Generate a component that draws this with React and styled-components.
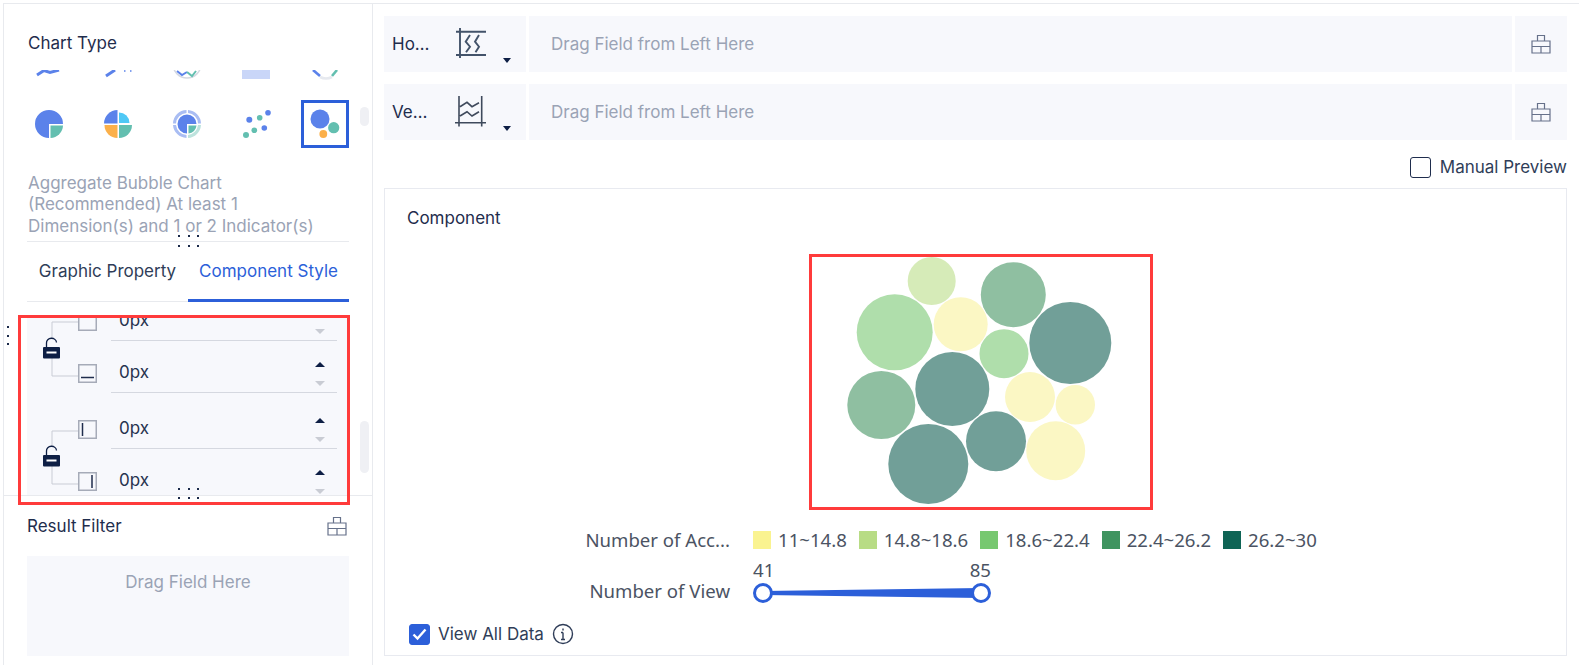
import React from "react";
import styled, { createGlobalStyle } from "styled-components";

const GlobalStyle = createGlobalStyle`
	html, body {
		margin: 0;
		padding: 0;
		background: #fff;
		overflow: hidden;
	}
	* {
		box-sizing: border-box;
	}
`;

const Page = styled.div`
	width: 1579px;
	height: 665px;
	padding-top: 3px;
	overflow: hidden;
	font-family: "Inter", "Liberation Sans", sans-serif;
	font-size: 17px;
	color: #1f2d4d;
`;

const Shell = styled.div`
	display: flex;
	height: 662px;
	margin-left: 3px;
	border-top: 1px solid #e8eaee;
`;

const SidePanel = styled.aside`
	position: relative;
	flex: 0 0 370px;
	padding-left: 23px;
	border-left: 1px solid #e8eaee;
	border-right: 1px solid #e8eaee;
`;

const SectionTitle = styled.div`
	line-height: 22px;
	padding: 28px 0 0 1px;
`;

const Scroller = styled.div`
	position: relative;
	width: 346px;
	height: 90px;
	margin: 16px 0 13px -2px;
	overflow: hidden;
`;

const TypeGrid = styled.div`
	display: grid;
	grid-template-columns: repeat(5, 48px);
	gap: 7px 21px;
	margin-top: -25px;
`;

const TypeCell = styled.div`
	display: flex;
	align-items: center;
	justify-content: center;
	height: 48px;
	border: 3px solid ${(props) => (props.$selected ? "#2c5fd9" : "transparent")};
`;

const ScrollThumb = styled.div`
	position: absolute;
	left: ${(props) => props.$left}px;
	top: ${(props) => props.$top}px;
	width: 9px;
	height: ${(props) => props.$height}px;
	border-radius: 5px;
	background: #eff0f4;
`;

const Hint = styled.div`
	width: 322px;
	padding: 0 0 4px 1px;
	line-height: 21.33px;
	white-space: nowrap;
	color: #9aa3b5;
	border-bottom: 1px solid #e8eaee;
`;

const Tabs = styled.div`
	display: flex;
	width: 322px;
	height: 60px;
`;

const Tab = styled.div`
	flex: 1;
	display: flex;
	align-items: center;
	justify-content: center;
	white-space: nowrap;
	color: ${(props) => (props.$active ? "#2c5fd9" : "#2f3d58")};
	border-bottom: ${(props) => (props.$active ? "3px solid #2c5fd9" : "1px solid #e8eaee")};
	padding-top: ${(props) => (props.$active ? "2px" : "0")};
`;

const StylePanel = styled.div`
	width: 322px;
	height: 177px;
	margin-top: 16px;
	background: #f7f8fc;
	overflow: hidden;
`;

const StyleInner = styled.div`
	display: flex;
	flex-direction: column;
	gap: 4px;
	margin-top: -29px;
`;

const LinkGroup = styled.div`
	display: flex;
	padding-left: 16px;

	> svg {
		flex: none;
		margin-top: -1px;
	}
`;

const GroupRows = styled.div`
	display: flex;
	flex-direction: column;
`;

const SizeRow = styled.div`
	display: flex;
	align-items: flex-start;
	height: 52px;
`;

const SideSquare = styled.svg`
	flex: none;
	margin-top: 23px;
`;

const SizeField = styled.div`
	display: flex;
	align-items: center;
	justify-content: space-between;
	width: 226px;
	height: 52px;
	margin-left: 14px;
	padding: 12px 12px 0 8px;
	border-bottom: 1px solid #d5d8e0;
	color: #26324f;
`;

const Stepper = styled.div`
	display: flex;
	flex-direction: column;
	gap: 14px;
	margin-top: 3px;
`;

const Arrow = styled.span`
	display: block;
	width: 0;
	height: 0;
	border-left: 5px solid transparent;
	border-right: 5px solid transparent;
	${(props) => (props.$down ? "border-top: 5px solid #c9ccd4;" : "border-bottom: 5px solid #0e1f45;")}
`;

const SideSplit = styled.div`
	height: 1px;
	margin-left: -23px;
	background: #e8eaee;
`;

const FilterHead = styled.div`
	display: flex;
	align-items: center;
	justify-content: space-between;
	width: 322px;
	height: 60px;
	padding-right: 2px;
`;

const DropBox = styled.div`
	width: 322px;
	height: 100px;
	padding-top: 16px;
	line-height: 20px;
	text-align: center;
	color: #9aa3b5;
	background: #f7f8fc;
`;

const HandleDots = styled.div`
	position: absolute;
	left: ${(props) => props.$left}px;
	top: ${(props) => props.$top}px;
	display: flex;
	flex-direction: ${(props) => (props.$vertical ? "column" : "row")};
	gap: ${(props) => (props.$vertical ? "6.5px" : "7.5px")};

	span {
		width: 2px;
		height: 2px;
		background: #1b2a4a;
	}
`;

const Highlight = styled.div`
	position: absolute;
	left: 14px;
	top: 311px;
	width: 332px;
	height: 190px;
	border: 3px solid #ff3b3b;
	pointer-events: none;
`;

const Main = styled.main`
	flex: 1;
	min-width: 0;
	padding: 12px 12px 0 11px;
`;

const DropRows = styled.div`
	display: flex;
	flex-direction: column;
	gap: 12px;
`;

const DropRow = styled.div`
	display: flex;
	gap: 3px;
	height: 56px;
`;

const AxisCell = styled.div`
	position: relative;
	display: flex;
	align-items: center;
	flex: 0 0 142px;
	padding-left: 8px;
	background: #f7f8fc;

	svg {
		margin-left: ${(props) => props.$iconGap}px;
	}
`;

const Caret = styled.span`
	position: absolute;
	right: 15px;
	bottom: ${(props) => props.$bottom}px;
	width: 0;
	height: 0;
	border-left: 4px solid transparent;
	border-right: 4px solid transparent;
	border-top: 5px solid #0e1f45;
`;

const FieldCell = styled.div`
	display: flex;
	align-items: center;
	flex: 1;
	padding-left: 22px;
	color: #9aa3b5;
	background: #f7f8fc;
`;

const ToolCell = styled.div`
	display: flex;
	align-items: center;
	justify-content: center;
	flex: 0 0 52px;
	background: #f7f8fc;
`;

const PreviewBar = styled.div`
	display: flex;
	justify-content: flex-end;
	align-items: center;
	gap: 9px;
	height: 48px;
	padding-top: 6px;
	color: #2f3d58;
	white-space: nowrap;
`;

const CheckBox = styled.span`
	display: flex;
	align-items: center;
	justify-content: center;
	width: 21px;
	height: 21px;
	border-radius: 3px;
	border: 1.5px solid ${(props) => (props.$checked ? "#2c5fd9" : "#1f2d4d")};
	background: ${(props) => (props.$checked ? "#2c5fd9" : "#fff")};
`;

const ChartCard = styled.section`
	height: 468px;
	padding: 20px 0 0 22px;
	border: 1px solid #e8eaf0;
`;

const CardTitle = styled.div`
	line-height: 18px;
`;

const ChartFrame = styled.div`
	width: 344px;
	height: 256px;
	margin: 27px 0 0 402px;
	border: 3px solid #ff3b3b;

	svg {
		display: block;
	}
`;

const LegendRow = styled.div`
	display: flex;
	align-items: ${(props) => (props.$end ? "flex-end" : "center")};
	margin-left: -22px;
	margin-top: ${(props) => props.$top}px;
	font-family: "Noto Sans", "Open Sans", sans-serif;
	font-size: 18.6px;
	color: #4b5363;
`;

const LegendLabel = styled.div`
	flex: 0 0 345px;
	line-height: 24px;
	text-align: right;
	padding-bottom: ${(props) => props.$bottom || 0}px;
	white-space: nowrap;
`;

const LegendItems = styled.div`
	display: flex;
	gap: 12px;
	margin-left: 23px;
`;

const LegendItem = styled.div`
	display: flex;
	align-items: center;
	gap: 7px;
	white-space: nowrap;
	line-height: 24px;

	i {
		width: 18px;
		height: 18px;
		background: ${(props) => props.$color};
	}
`;

const RangeSlider = styled.div`
	width: 244px;
	margin-left: 20px;

	svg {
		display: block;
	}
`;

const RangeValues = styled.div`
	display: flex;
	justify-content: space-between;
	padding: 0 3px 0 3px;
	line-height: 20px;
`;

const ViewAll = styled.div`
	display: flex;
	align-items: center;
	gap: 8px;
	margin: 17px 0 0 2px;
	color: #2f3d58;
`;

const BUBBLES = [
	[931.7, 281, 24, "#d6ebb8"],
	[1013.3, 294.7, 32.5, "#8fbfa1"],
	[894.7, 332.3, 38, "#afdeab"],
	[960.7, 324.3, 27, "#fbf7c4"],
	[1070.3, 343, 41, "#719f98"],
	[1004, 353.7, 24.5, "#afdeab"],
	[952.3, 389, 37, "#719f98"],
	[881.3, 405, 34, "#8fbfa1"],
	[1030, 397, 25, "#fbf7c4"],
	[1075.3, 404.7, 19.7, "#fbf7c4"],
	[996, 441.3, 30, "#719f98"],
	[928.3, 464, 40, "#719f98"],
	[1055.7, 450.7, 29.5, "#fbf7c4"],
];

const LEGEND = [
	["11~14.8", "#faf390"],
	["14.8~18.6", "#b8dc85"],
	["18.6~22.4", "#77c870"],
	["22.4~26.2", "#3f9460"],
	["26.2~30", "#0f6455"],
];

const BLUE = "#5b82ea";
const TEAL = "#63bfb0";
const ORANGE = "#fbb04a";

const TYPE_ICONS = [
	<path d="M3 21 10 16.500 16 18.500 25 16" fill="none" stroke={BLUE} strokeWidth="3" />,
	<g>
		<path d="M3 22 12 16" fill="none" stroke={BLUE} strokeWidth="3" />
		<path d="M21 17h1.500M27 17h1.500" stroke={BLUE} strokeWidth="1.500" />
	</g>,
	<g fill="none">
		<circle cx="15" cy="10" r="14" stroke="#d5d9e2" strokeWidth="1.500" />
		<path d="M5 17 10 21 15 18" stroke={BLUE} strokeWidth="2" />
		<path d="M15 18 20 22 24 17" stroke={TEAL} strokeWidth="2" />
	</g>,
	<rect x="1" y="10" width="28" height="15" fill="#c9d6f8" />,
	<g fill="none" strokeWidth="2.600">
		<path d="M3 16 10 22" stroke={BLUE} />
		<path d="M27 16 22 22" stroke={TEAL} />
		<path d="M10 23q6 3 12 0" stroke="#e6e9ef" />
	</g>,
	<g>
		<path d="M15 15V29A14 14 0 1 1 29 15H15" fill={BLUE} />
		<path d="M16.500 16.500H29A13 13 0 0 1 16.500 29Z" fill={TEAL} />
	</g>,
	<g>
		<path d="M14.500 1V14.500H1A13.500 13.500 0 0 1 14.500 1" fill={BLUE} />
		<path d="M16 3.500V14H26.500A10.500 10.500 0 0 0 16 3.500" fill="#4fc8f5" />
		<path d="M14.500 16V29A13 13 0 0 1 1.500 16Z" fill={ORANGE} />
		<path d="M16 16H29A13 13 0 0 1 16 29Z" fill={TEAL} />
	</g>,
	<g>
		<path d="M14.500 1A14 14 0 0 0 1 14.500H4A11 11 0 0 1 14.500 4ZM16 1A14 14 0 0 1 29 14.500H26A11 11 0 0 0 16 4ZM1 16A14 14 0 0 0 14.500 29V26A11 11 0 0 1 4 16Z" fill="#a9bdf3" />
		<path d="M29 16A14 14 0 0 1 16 29V26A11 11 0 0 0 26 16Z" fill="#bde3dd" />
		<path d="M15 15V24.500A9.500 9.500 0 1 1 24.500 15H15" fill={BLUE} />
		<path d="M16.500 16.500H24.500A8.500 8.500 0 0 1 16.500 24.500Z" fill={TEAL} />
	</g>,
	<g>
		<circle cx="27" cy="3.700" r="2.800" fill={BLUE} />
		<circle cx="18.700" cy="8.700" r="2.800" fill={TEAL} />
		<circle cx="8.300" cy="10.700" r="3" fill={BLUE} />
		<circle cx="23.300" cy="19" r="2.800" fill={BLUE} />
		<circle cx="13.300" cy="21.300" r="2.800" fill={TEAL} />
		<circle cx="5" cy="26" r="3" fill={TEAL} />
	</g>,
	<g>
		<circle cx="10" cy="10" r="9.500" fill={BLUE} />
		<circle cx="23.700" cy="18.700" r="5.600" fill={TEAL} />
		<circle cx="13.300" cy="25" r="3.900" fill={ORANGE} />
	</g>,
];

const ToolboxIcon = () => (
	<svg width="20" height="20" viewBox="0 0 20 20" fill="none" stroke="#66718a" strokeWidth="1.200">
		<path d="M1 7H19V19H1ZM6.500 7V1.500H13.500V7M1 12.500H19M10 12.500V19" />
	</svg>
);

const LinkBracket = ({ top, bottom }) => (
	<svg width="35" height="104" viewBox="0 0 35 104">
		<path d={`M35 ${top}H9V51M9 70V${bottom}H35`} fill="none" stroke="#c9ccd5" />
		<path d="M3.500 60V55A5 4.500 0 0 1 13.500 54.500" fill="none" stroke="#0e1f45" strokeWidth="1.300" />
		<rect x="0" y="59" width="17" height="11.500" rx="1" fill="#0e1f45" />
		<rect x="3.500" y="63.500" width="10" height="2" fill="#fff" />
	</svg>
);

const SideIcon = ({ side }) => {
	const marks = {
		top: "M3 4.500H16",
		bottom: "M3 13.500H16",
		left: "M4.500 3V16",
		right: "M14 3V16",
	};
	return (
		<SideSquare width="19" height="19" viewBox="0 0 19 19" fill="none">
			<rect x="0.750" y="0.750" width="17.500" height="17.500" stroke="#a6abb8" strokeWidth="1.500" />
			<path d={marks[side]} stroke="#1f2d4d" strokeWidth="1.500" />
		</SideSquare>
	);
};

const Dots = (props) => (
	<HandleDots {...props}>
		<span />
		<span />
		<span />
	</HandleDots>
);

const SizeInput = ({ side }) => (
	<SizeRow>
		<SideIcon side={side} />
		<SizeField>
			0px
			<Stepper>
				<Arrow />
				<Arrow $down />
			</Stepper>
		</SizeField>
	</SizeRow>
);

const App = () => {
	return (
		<Page>
			<GlobalStyle />
			<Shell>
				<SidePanel>
					<SectionTitle>Chart Type</SectionTitle>
					<Scroller>
						<TypeGrid>
							{TYPE_ICONS.map((icon, i) => (
								<TypeCell key={i} $selected={i === 9}>
									<svg width="30" height="30" viewBox="0 0 30 30">
										{icon}
									</svg>
								</TypeCell>
							))}
						</TypeGrid>
						<ScrollThumb $left={335} $top={37} $height={19} />
					</Scroller>
					<Hint>
						Aggregate Bubble Chart
						<br />
						(Recommended) At least 1
						<br />
						Dimension(s) and 1 or 2 Indicator(s)
					</Hint>
					<Tabs>
						<Tab>Graphic Property</Tab>
						<Tab $active>Component Style</Tab>
					</Tabs>
					<StylePanel>
						<StyleInner>
							<LinkGroup>
								<LinkBracket top={34} bottom={88} />
								<GroupRows>
									<SizeInput side="top" />
									<SizeInput side="bottom" />
								</GroupRows>
							</LinkGroup>
							<LinkGroup>
								<LinkBracket top={35} bottom={88} />
								<GroupRows>
									<SizeInput side="left" />
									<SizeInput side="right" />
								</GroupRows>
							</LinkGroup>
						</StyleInner>
					</StylePanel>
					<SideSplit />
					<FilterHead>
						Result Filter
						<ToolboxIcon />
					</FilterHead>
					<DropBox>Drag Field Here</DropBox>
					<ScrollThumb $left={356} $top={417} $height={52} />
					<Dots $left={174} $top={231} />
					<Dots $left={174} $top={241} />
					<Dots $left={174} $top={484} />
					<Dots $left={174} $top={493} />
					<Dots $left={3} $top={322} $vertical />
					<Highlight />
				</SidePanel>
				<Main>
					<DropRows>
						<DropRow>
							<AxisCell $iconGap={26}>
								Ho…
								<svg width="32" height="32" viewBox="0 0 32 32" fill="none" stroke="#43536a" strokeWidth="1.900">
									<path d="M0 3.700H30M0 27H30M4 0V30M14 7 9.700 13.700 14 18.700 10 24.300M23 7 19 13.700 23 18.700 19.500 24.300" />
								</svg>
								<Caret $bottom={9} />
							</AxisCell>
							<FieldCell>Drag Field from Left Here</FieldCell>
							<ToolCell>
								<ToolboxIcon />
							</ToolCell>
						</DropRow>
						<DropRow>
							<AxisCell $iconGap={28}>
								Ve…
								<svg width="32" height="32" viewBox="0 0 32 32" fill="none" stroke="#3f4a5c" strokeWidth="1.600">
									<path d="M0 26.700H31M4 0V30.500M26.700 0V30.500M5 10.700 12 6.300 17 10.700 24 6.700M5 20 12 15.700 17 20 24 15.700" />
								</svg>
								<Caret $bottom={9} />
							</AxisCell>
							<FieldCell>Drag Field from Left Here</FieldCell>
							<ToolCell>
								<ToolboxIcon />
							</ToolCell>
						</DropRow>
					</DropRows>
					<PreviewBar>
						<CheckBox />
						Manual Preview
					</PreviewBar>
					<ChartCard>
						<CardTitle>Component</CardTitle>
						<ChartFrame>
							<svg width="338" height="250" viewBox="812 257 338 250">
								{BUBBLES.map(([cx, cy, r, fill]) => (
									<circle key={`${cx}-${cy}`} cx={cx} cy={cy} r={r} fill={fill} />
								))}
							</svg>
						</ChartFrame>
						<LegendRow $top={18}>
							<LegendLabel>Number of Acc...</LegendLabel>
							<LegendItems>
								{LEGEND.map(([label, color]) => (
									<LegendItem key={label} $color={color}>
										<i />
										{label}
									</LegendItem>
								))}
							</LegendItems>
						</LegendRow>
						<LegendRow $top={8} $end>
							<LegendLabel $bottom={3}>Number of View</LegendLabel>
							<RangeSlider>
								<RangeValues>
									<span>41</span>
									<span>85</span>
								</RangeValues>
								<svg width="244" height="26" viewBox="0 0 244 26">
									<path d="M13 11 231 8V18L13 15Z" fill="#2c5fd9" />
									<circle cx="13" cy="13" r="8.500" fill="#fff" stroke="#2c5fd9" strokeWidth="3" />
									<circle cx="231" cy="13" r="8.500" fill="#fff" stroke="#2c5fd9" strokeWidth="3" />
								</svg>
							</RangeSlider>
						</LegendRow>
						<ViewAll>
							<CheckBox $checked>
								<svg width="15" height="13" viewBox="0 0 15 13" fill="none" stroke="#fff" strokeWidth="2.400">
									<path d="M1.500 6.500 5.500 10.500 13.500 1.500" />
								</svg>
							</CheckBox>
							View All Data
							<svg width="22" height="22" viewBox="0 0 22 22" fill="none" stroke="#2f3d58" strokeWidth="1.400">
								<circle cx="11" cy="11" r="9.500" />
								<path d="M11 9.500V16.500M9 9.500H11M9 16.500H13M11 5.500V7.500" />
							</svg>
						</ViewAll>
					</ChartCard>
				</Main>
			</Shell>
		</Page>
	);
};

export default App;
